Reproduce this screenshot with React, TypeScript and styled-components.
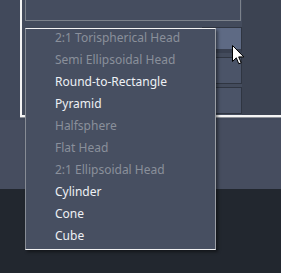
import React from 'react';
import styled, { createGlobalStyle } from 'styled-components';

const GlobalStyle = createGlobalStyle`
  html, body {
    margin: 0;
    padding: 0;
    background: #22272f;
  }
`;

type Item = { label: string; disabled?: boolean };

const items: Item[] = [
  { label: '2:1 Torispherical Head', disabled: true },
  { label: 'Semi Ellipsoidal Head', disabled: true },
  { label: 'Round-to-Rectangle' },
  { label: 'Pyramid' },
  { label: 'Halfsphere', disabled: true },
  { label: 'Flat Head', disabled: true },
  { label: '2:1 Ellipsoidal Head', disabled: true },
  { label: 'Cylinder' },
  { label: 'Cone' },
  { label: 'Cube' },
];

export default function App() {
  return (
    <>
      <GlobalStyle />
      <Page>
        <TopArea>
          <LeftStrip />
          <Dialog>
            <Content>
              <FieldBox />
              <ButtonColumn>
                <ShapeButton $hover />
                <ShapeButton />
                <ShapeButton />
              </ButtonColumn>
            </Content>
            <SideColumn />
          </Dialog>
        </TopArea>
        <MidArea />
        <BottomArea />

        <Menu>
          {items.map((it) => (
            <MenuItem key={it.label} $disabled={!!it.disabled}>
              {it.label}
            </MenuItem>
          ))}
        </Menu>

        <Cursor width="13" height="20" viewBox="0 0 13 20">
          <path
            d="M0.5 0.5 L0.5 16.5 L4.3 12.8 L6.8 18.8 L9.2 17.8 L6.7 11.9 L11.8 11.9 Z"
            fill="#ffffff"
            stroke="#000000"
            strokeWidth="1"
            strokeLinejoin="miter"
          />
        </Cursor>
      </Page>
    </>
  );
}

const Page = styled.div`
  position: relative;
  width: 281px;
  height: 273px;
  overflow: hidden;
  display: flex;
  flex-direction: column;
  font-family: 'Noto Sans', 'Open Sans', sans-serif;
`;

const TopArea = styled.div`
  display: flex;
  height: 120px;
  background: #41495b;
`;

const LeftStrip = styled.div`
  width: 20px;
  flex-shrink: 0;
`;

const Dialog = styled.div`
  flex: 1;
  display: flex;
  border-left: 2px solid #f4f4f4;
  border-bottom: 2px solid #f4f4f4;
  box-shadow: 0 1px 0 #8d9199;
  height: 117px;
  box-sizing: border-box;
`;

const Content = styled.div`
  width: 220px;
  flex-shrink: 0;
  background: #434b5c;
  display: flex;
  flex-direction: column;
  padding: 0 0 0 3px;
  box-sizing: border-box;
`;

const FieldBox = styled.div`
  width: 216px;
  height: 21px;
  box-sizing: border-box;
  border: 1px solid #7c828b;
  border-top: none;
  background: #454d5f;
`;

const ButtonColumn = styled.div`
  display: flex;
  flex-direction: column;
  align-items: flex-end;
  gap: 3px;
  margin-top: 6px;
`;

const ShapeButton = styled.div<{ $hover?: boolean }>`
  width: 40px;
  height: ${(p) => (p.$hover ? '26px' : '27px')};
  box-sizing: border-box;
  border: 1px solid #2f3541;
  border-bottom-width: ${(p) => (p.$hover ? '4px' : '1px')};
  border-bottom-color: ${(p) => (p.$hover ? '#394050' : '#2f3541')};
  background: ${(p) => (p.$hover ? '#5e6a84' : '#4b5468')};
  margin-bottom: ${(p) => (p.$hover ? '1px' : '0')};
`;

const SideColumn = styled.div`
  flex: 1;
  background: #3c4352;
`;

const MidArea = styled.div`
  height: 69px;
  background: #464d5f;
`;

const BottomArea = styled.div`
  flex: 1;
  background: #22272f;
`;

const Menu = styled.div`
  position: absolute;
  left: 25px;
  top: 28px;
  width: 191px;
  box-sizing: border-box;
  background: #474f61;
  border-top: 1px solid #f2f2f2;
  border-bottom: 1px solid #f2f2f2;
  border-left: 1px solid #878c95;
  border-right: 1px solid #9a9ea5;
  box-shadow: 2px 2px 3px rgba(0, 0, 0, 0.45);
  display: flex;
  flex-direction: column;
`;

const MenuItem = styled.div<{ $disabled: boolean }>`
  height: 22px;
  box-sizing: border-box;
  padding: 0 0 4px 29px;
  line-height: 18px;
  font-size: 12px;
  white-space: nowrap;
  color: ${(p) => (p.$disabled ? '#8a909b' : '#eef1f5')};
`;

const Cursor = styled.svg`
  position: absolute;
  left: 232px;
  top: 45px;
`;
